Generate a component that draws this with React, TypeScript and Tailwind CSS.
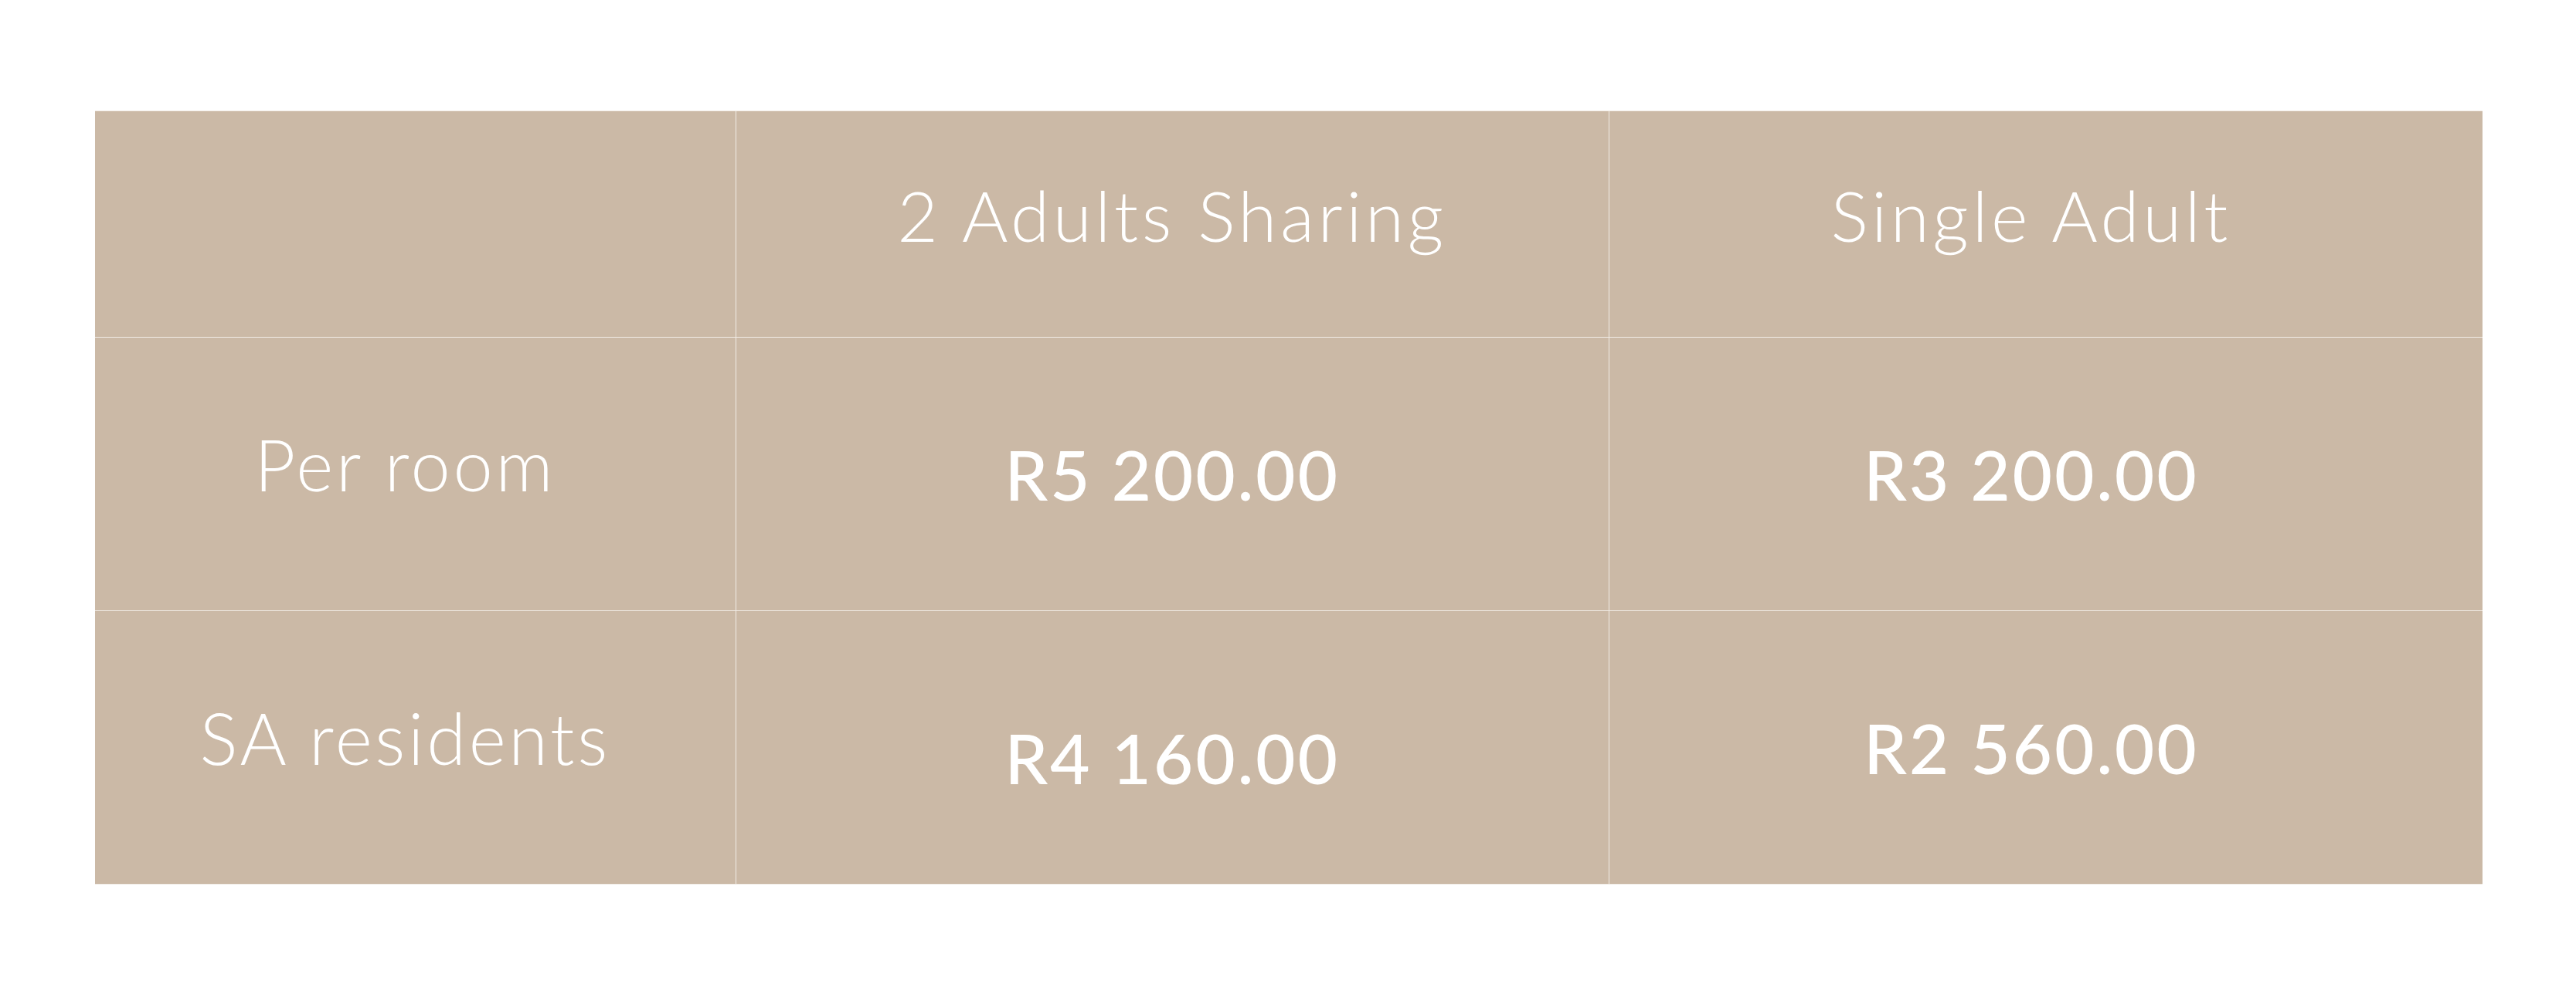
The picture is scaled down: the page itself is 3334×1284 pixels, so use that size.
const rows = [
  { label: "Per room", sharing: "R5 200.00", single: "R3 200.00" },
  { label: "SA residents", sharing: "R4 160.00", single: "R2 560.00" },
];

export default function App() {
  return (
    <div className="w-[3334px] h-[1284px] bg-white pl-[123px] pt-[143px] font-['Lato',sans-serif] text-white">
      <table className="w-[3090px] table-fixed border-collapse bg-[#cbb9a6]">
        <colgroup>
          <col className="w-[829px]" />
          <col className="w-[1130px]" />
          <col />
        </colgroup>
        <thead>
          <tr className="h-[293px] border-t border-[#f1ece6]">
            <th className="border-r border-[#f1ece6]" />
            <th className="border-r border-[#f1ece6] text-[91px] font-light tracking-[0.05em] pb-[24px]">
              2 Adults Sharing
            </th>
            <th className="text-[91px] font-light tracking-[0.05em] pb-[24px] pr-[38px]">Single Adult</th>
          </tr>
        </thead>
        <tbody>
          {rows.map((r, i) => (
            <tr key={r.label} className={`h-[354px] border-t border-[#f1ece6] ${i === 1 ? "border-b" : ""}`}>
              <td className="border-r border-[#f1ece6] text-center text-[92px] font-light tracking-[0.04em] pb-[26px] pr-[26px]">
                {r.label}
              </td>
              <td
                className={`border-r border-[#f1ece6] text-center text-[89px] font-medium tracking-[0.03em] ${
                  i === 1 ? "pt-[26px]" : ""
                }`}
              >
                {r.sharing}
              </td>
              <td className="text-center text-[89px] font-medium tracking-[0.03em] pr-[38px]">{r.single}</td>
            </tr>
          ))}
        </tbody>
      </table>
    </div>
  );
}
